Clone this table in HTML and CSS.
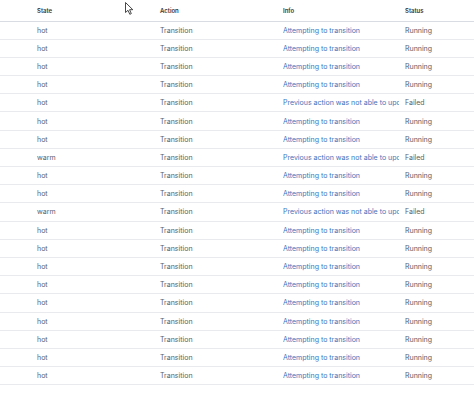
FILE: index.html
```html
<!DOCTYPE html>
<html lang="en">
<head>
  <meta charset="UTF-8">
  <title>Index lifecycle</title>
  <link rel="stylesheet" href="styles.css">
</head>
<body>
  <div class="table-wrap">
    <table class="policy-table">
      <colgroup>
        <col class="col-gutter">
        <col class="col-state">
        <col class="col-action">
        <col class="col-info">
        <col class="col-status">
      </colgroup>
      <thead>
        <tr>
          <th></th>
          <th>State</th>
          <th>Action</th>
          <th>Info</th>
          <th>Status</th>
        </tr>
      </thead>
      <tbody id="rows"></tbody>
    </table>
  </div>

  <svg class="cursor" width="9" height="13" viewBox="0 0 9 13">
    <path d="M0.5 0.5 L0.5 10.5 L3 8.3 L4.8 12.3 L6.3 11.6 L4.6 7.7 L7.8 7.7 Z" fill="#fff" stroke="#333" stroke-width="0.9" stroke-linejoin="round"/>
  </svg>

  <script>
    const rows = [
      ['hot', 'ok'], ['hot', 'ok'], ['hot', 'ok'], ['hot', 'ok'],
      ['hot', 'fail'], ['hot', 'ok'], ['hot', 'ok'], ['warm', 'fail'],
      ['hot', 'ok'], ['hot', 'ok'], ['warm', 'fail'], ['hot', 'ok'],
      ['hot', 'ok'], ['hot', 'ok'], ['hot', 'ok'], ['hot', 'ok'],
      ['hot', 'ok'], ['hot', 'ok'], ['hot', 'ok'], ['hot', 'ok'],
      ['hot', 'ok']
    ];

    const body = document.getElementById('rows');
    rows.forEach(([state, result]) => {
      const failed = result === 'fail';
      const tr = document.createElement('tr');
      tr.innerHTML =
        '<td></td>' +
        '<td>' + state + '</td>' +
        '<td>Transition</td>' +
        '<td class="info"><span class="info-text"><a href="#">' +
          (failed ? 'Previous action was not able to update' : 'Attempting to transition') +
        '</a></span></td>' +
        '<td>' + (failed ? 'Failed' : 'Running') + '</td>';
      body.appendChild(tr);
    });
  </script>
</body>
</html>
```

FILE: styles.css
```css
* {
  box-sizing: border-box;
  margin: 0;
  padding: 0;
}

body {
  font-family: 'Inter', 'Noto Sans', sans-serif;
  background-color: #fff;
  color: #595d66;
  overflow: hidden;
  -webkit-font-smoothing: antialiased;
}

.table-wrap {
  height: 387px;
  overflow: hidden;
}

.policy-table {
  width: 100%;
  table-layout: fixed;
  border-collapse: collapse;
}

.col-gutter { width: 32px; }
.col-state { width: 123px; }
.col-action { width: 123px; }
.col-info { width: 122px; }

.policy-table th {
  height: 21px;
  padding: 0 5px;
  text-align: left;
  font-size: 6px;
  font-weight: 600;
  color: #343741;
  border-bottom: 1px solid #d9dde3;
  vertical-align: middle;
}

.policy-table td {
  height: 18.2px;
  padding: 0 5px;
  font-size: 7px;
  white-space: nowrap;
  overflow: hidden;
  border-bottom: 1px solid #e8eaed;
  vertical-align: middle;
}

.policy-table td.info {
  padding-right: 0;
}

.info-text {
  display: block;
  width: 116px;
  overflow: hidden;
}

.policy-table a {
  color: #3a75bd;
  text-decoration: none;
}

.cursor {
  position: absolute;
  left: 125px;
  top: 2px;
}
```
